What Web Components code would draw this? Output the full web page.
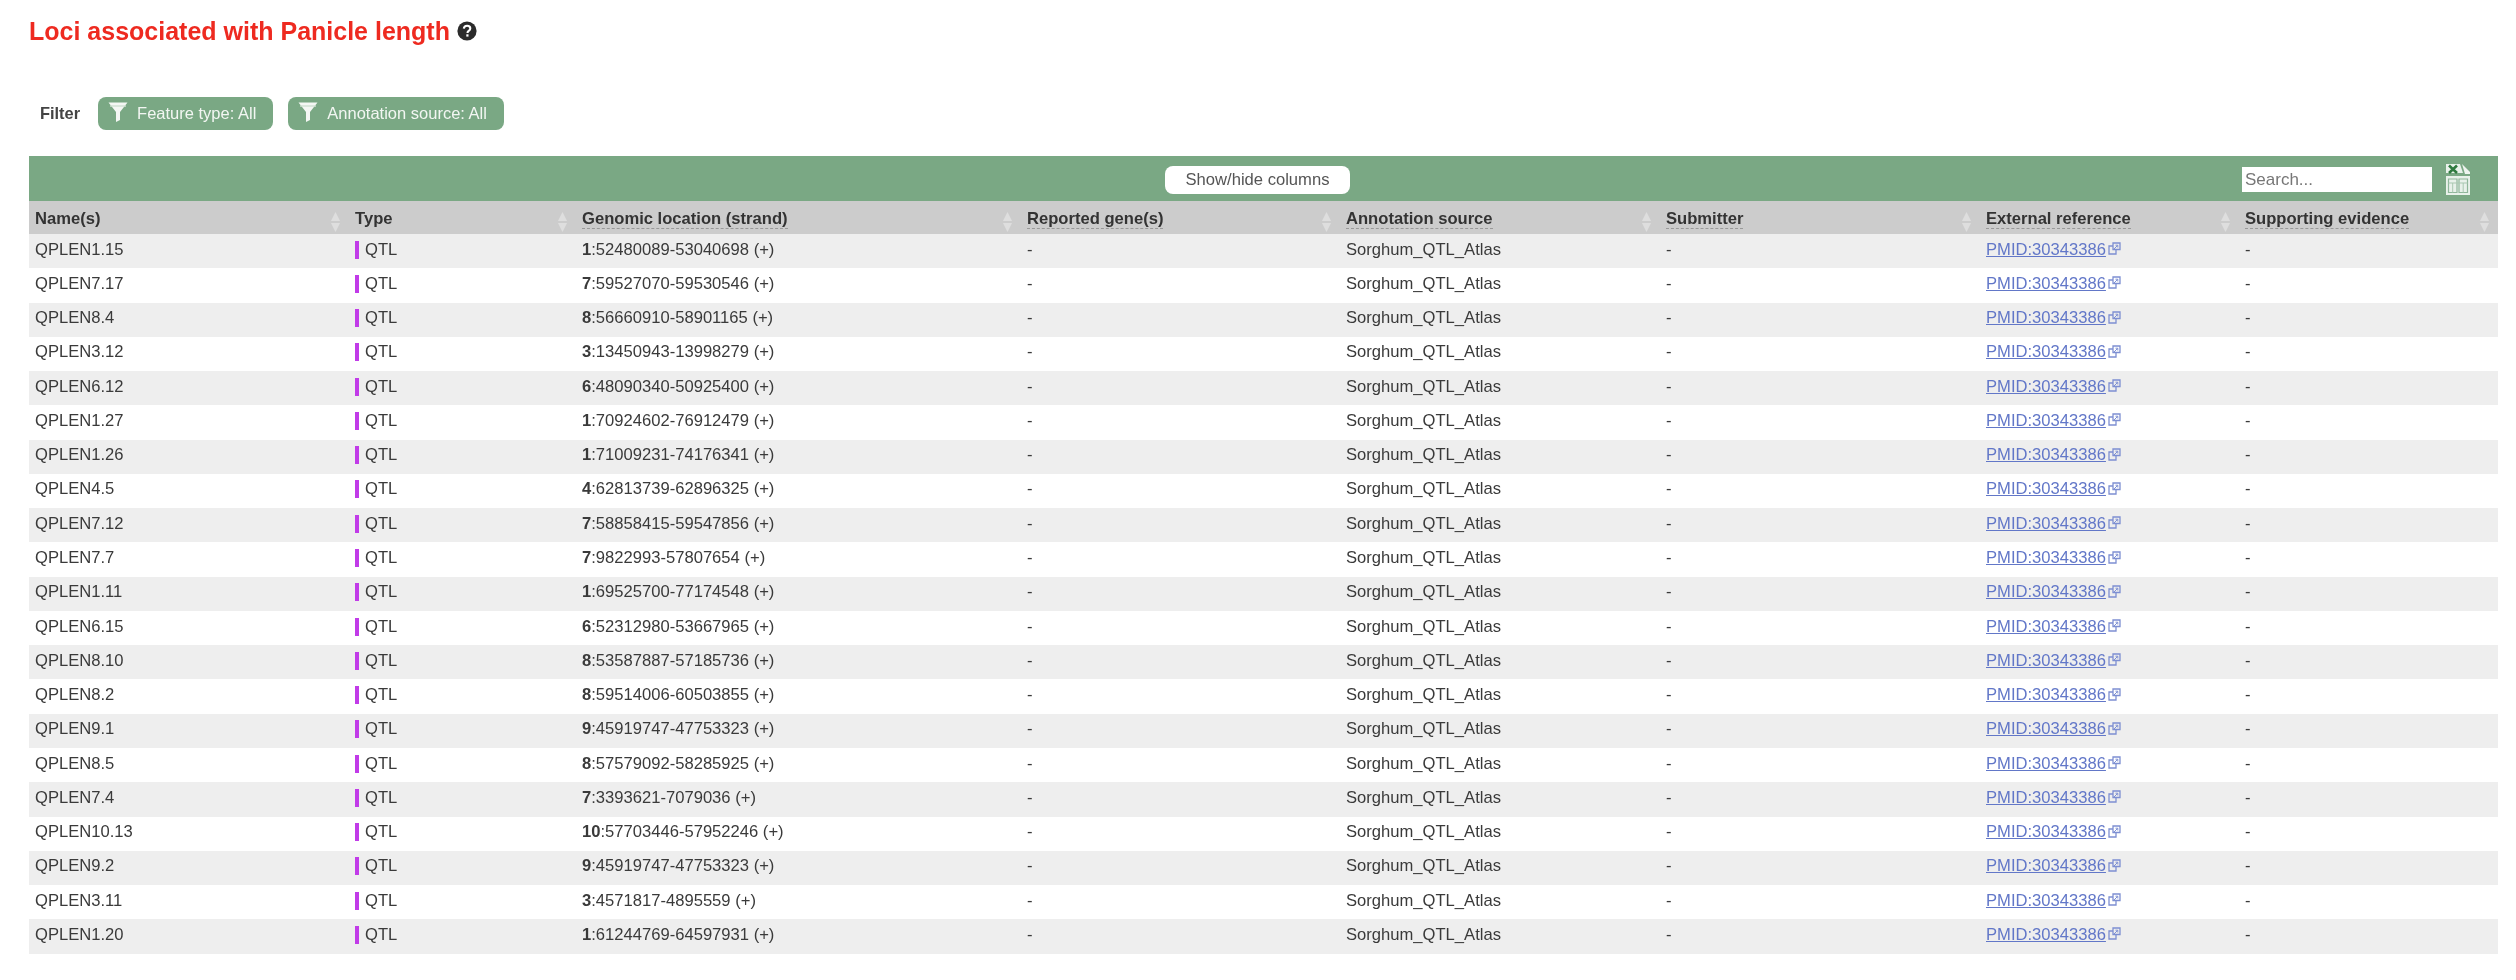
<!DOCTYPE html>
<html lang="en">
<head>
<meta charset="utf-8">
<title>Loci associated with Panicle length</title>
<style>
html,body{margin:0;padding:0;background:#fff;}
body{font-family:"Liberation Sans",Arial,sans-serif;font-size:16.6px;color:#333;}
</style>
</head>
<body>
<loci-page></loci-page>
<script>
const COLS='320px 227px 445px 319px 320px 320px 259px 259px';
function el(html){const t=document.createElement('template');t.innerHTML=html;return t;}

class HelpIcon extends HTMLElement{
  constructor(){super();this.attachShadow({mode:'open'}).innerHTML=`<style>:host{display:inline-flex;width:20px;height:20px}svg{display:block}</style>
  <svg width="20" height="20" viewBox="0 0 20 20"><circle cx="10" cy="10" r="9.6" fill="#2b2b2b"/><path d="M6.8 7.6c.2-1.9 1.5-2.9 3.3-2.9 1.9 0 3.2 1.1 3.2 2.7 0 1.3-.8 1.9-1.6 2.5-.8.6-1.2 1-1.2 2" fill="none" stroke="#fff" stroke-width="2.1"/><rect x="9.3" y="13.3" width="2.2" height="2.3" fill="#fff"/></svg>`;}
}
customElements.define('help-icon',HelpIcon);

class PageTitle extends HTMLElement{
  constructor(){super();this.attachShadow({mode:'open'}).innerHTML=`<style>
  :host{display:flex;height:97px;padding-bottom:51px;box-sizing:border-box;align-items:flex-end}
  h1{margin:0;font:bold 25px/30px "Liberation Sans",Arial,sans-serif;color:#ee2a20}
  help-icon{margin-bottom:5px}
  .wrap{display:flex;align-items:flex-end;gap:7px}
  </style><div class="wrap"><h1><slot></slot></h1><help-icon></help-icon></div>`;}
}
customElements.define('page-title',PageTitle);

class FilterChip extends HTMLElement{
  constructor(){super();this.attachShadow({mode:'open'}).innerHTML=`<style>
  :host{display:inline-flex;align-items:center;gap:9px;height:33px;box-sizing:border-box;padding:0 17px 0 10px;background:#7aa884;border-radius:8px;color:#f2f6f2;font-size:16.5px;white-space:nowrap}
  svg{display:block;margin-top:-4px}
  </style><svg width="20" height="20" viewBox="0 0 20 20"><path d="M0.5 0.5h19L12 10v8l-4 2v-10z" fill="#f4f7f4"/><path d="M2 4h16" stroke="#cfe0d2" stroke-width="1.4"/></svg><slot></slot>`;}
}
customElements.define('filter-chip',FilterChip);

class FilterBar extends HTMLElement{
  constructor(){super();this.attachShadow({mode:'open'}).innerHTML=`<style>
  :host{display:flex;align-items:center;height:33px;margin:0 0 26px 11px;color:#444}
  b{font-size:16.4px;margin-right:18px}
  .chips{display:flex;gap:15px}
  </style><b>Filter</b><div class="chips"><slot></slot></div>`;}
}
customElements.define('filter-bar',FilterBar);

class ExcelIcon extends HTMLElement{
  constructor(){super();this.attachShadow({mode:'open'}).innerHTML=`<style>:host{display:block;width:24px;height:31px}svg{display:block}</style>
  <svg width="24" height="31" viewBox="0 0 24 31"><path d="M0 12h24v19H0z" fill="#e8f1ea"/><path d="M2.5 15h8.5v13.5H2.5zM13 15h8.5v13.5H13z" fill="none" stroke="#8fb69a" stroke-width="1.2"/><path d="M2.5 19h19M6.7 19v9.5M17.2 19v9.5" stroke="#a9c7b1" stroke-width="1"/><path d="M0 0h14l3 9H0z" fill="#e8f1ea"/><path d="M3 1.5l8 7.5M11 1.5L3 9" stroke="#2f7a3f" stroke-width="2.6"/><path d="M16 0l8 8v2h-5z" fill="#eef4ef"/></svg>`;}
}
customElements.define('excel-icon',ExcelIcon);

class TableBar extends HTMLElement{
  constructor(){super();this.attachShadow({mode:'open'}).innerHTML=`<style>
  :host{display:grid;grid-template-columns:1136px 185px 1fr;align-items:center;height:44.5px;background:#7aa884;box-sizing:border-box}
  button{grid-column:2;height:28px;margin-top:3.5px;border:0;border-radius:8px;background:#fff;color:#555;font:16.6px "Liberation Sans",Arial,sans-serif;padding:0}
  .r{grid-column:3;display:flex;justify-content:flex-end;align-items:center;gap:14px;padding-right:28px}
  input{width:190px;height:25px;box-sizing:border-box;border:0;margin:3px 0 0;padding:0 3px;background:#fff;font:17px "Liberation Sans",Arial,sans-serif;color:#555}
  input::placeholder{color:#777;opacity:1}
  excel-icon{margin-top:2px}
  </style><button type="button">Show/hide columns</button><div class="r"><input placeholder="Search..."><excel-icon></excel-icon></div>`;}
}
customElements.define('table-bar',TableBar);

class HeadCell extends HTMLElement{
  constructor(){super();this.attachShadow({mode:'open'}).innerHTML=`<style>
  :host{display:flex;align-items:center;justify-content:space-between;padding:0 8px 0 6px;font-weight:bold;color:#333;white-space:nowrap;min-width:0}
  span{line-height:18px;margin-top:4px}
  :host([tip]) span{border-bottom:1px dashed #999}
  svg{display:block;flex:none;margin-top:9px}
  </style><span><slot></slot></span><svg width="11" height="20" viewBox="0 0 11 20"><path d="M5.5 0L10 9H1z" fill="#dedede"/><path d="M1 11h9l-4.5 9z" fill="#dedede"/></svg>`;}
}
customElements.define('head-cell',HeadCell);

class TableHead extends HTMLElement{
  constructor(){super();this.attachShadow({mode:'open'}).innerHTML=`<style>
  :host{display:grid;grid-template-columns:${COLS};height:33.5px;background:#ccc}
  </style><slot></slot>`;}
}
customElements.define('table-head',TableHead);

class ExtLink extends HTMLElement{
  constructor(){super();this.attachShadow({mode:'open'}).innerHTML=`<style>
  :host{display:inline-flex;align-items:center;gap:2px;color:#6277c8}
  a{color:inherit;text-decoration:underline}
  svg{display:block;margin-top:-2px}
  </style><a href="#"><slot></slot></a><svg width="13" height="13" viewBox="0 0 13 13" fill="none" stroke="#7d8fd2" stroke-width="1.3"><path d="M5 1h7v6.5H5z"/><path d="M5 4H1v8h7V8"/><path d="M6 7l3.5-3.5M7.5 3.2h2.3v2.3" stroke-width="1"/></svg>`;}
}
customElements.define('ext-link',ExtLink);

const rowT=el(`<style>
:host{display:grid;grid-template-columns:${COLS};align-items:center;height:34.28px;box-sizing:border-box;padding-bottom:3px;background:#fff;color:#3a3a3a;white-space:nowrap}
:host(:nth-child(odd)){background:#eee}
.c{padding-left:6px}
.t{display:flex;align-items:center;gap:6px}
.bar{width:4px;height:18px;background:#c13be8;flex:none}
</style>
<div class="c n"></div>
<div class="c t"><i class="bar"></i><span>QTL</span></div>
<div class="c"><b class="ch"></b><span class="loc"></span></div>
<div class="c">-</div>
<div class="c">Sorghum_QTL_Atlas</div>
<div class="c">-</div>
<div class="c"><ext-link>PMID:30343386</ext-link></div>
<div class="c">-</div>`);
class LociRow extends HTMLElement{
  constructor(){super();this.attachShadow({mode:'open'}).appendChild(rowT.content.cloneNode(true));}
  connectedCallback(){
    const s=this.shadowRoot,[c,r]=this.getAttribute('loc').split(':');
    s.querySelector('.n').textContent=this.getAttribute('name');
    s.querySelector('.ch').textContent=c;
    s.querySelector('.loc').textContent=':'+r+' (+)';
  }
}
customElements.define('loci-row',LociRow);

class LociTable extends HTMLElement{
  constructor(){super();this.attachShadow({mode:'open'}).innerHTML=`<style>:host{display:block;width:2469px}</style><slot></slot>`;}
}
customElements.define('loci-table',LociTable);

const DATA=[['QPLEN1.15','1:52480089-53040698'],['QPLEN7.17','7:59527070-59530546'],['QPLEN8.4','8:56660910-58901165'],['QPLEN3.12','3:13450943-13998279'],['QPLEN6.12','6:48090340-50925400'],['QPLEN1.27','1:70924602-76912479'],['QPLEN1.26','1:71009231-74176341'],['QPLEN4.5','4:62813739-62896325'],['QPLEN7.12','7:58858415-59547856'],['QPLEN7.7','7:9822993-57807654'],['QPLEN1.11','1:69525700-77174548'],['QPLEN6.15','6:52312980-53667965'],['QPLEN8.10','8:53587887-57185736'],['QPLEN8.2','8:59514006-60503855'],['QPLEN9.1','9:45919747-47753323'],['QPLEN8.5','8:57579092-58285925'],['QPLEN7.4','7:3393621-7079036'],['QPLEN10.13','10:57703446-57952246'],['QPLEN9.2','9:45919747-47753323'],['QPLEN3.11','3:4571817-4895559'],['QPLEN1.20','1:61244769-64597931']];

class LociPage extends HTMLElement{
  constructor(){super();
    const rows=DATA.map(d=>`<loci-row name="${d[0]}" loc="${d[1]}"></loci-row>`).join('');
    this.attachShadow({mode:'open'}).innerHTML=`<style>
    :host{display:block;padding:0 18px 0 29px;height:980px;box-sizing:border-box;overflow:hidden;filter:blur(.6px)}
    </style>
    <page-title>Loci associated with Panicle length</page-title>
    <filter-bar><filter-chip>Feature type: All</filter-chip><filter-chip>Annotation source: All</filter-chip></filter-bar>
    <table-bar></table-bar>
    <table-head>
      <head-cell>Name(s)</head-cell><head-cell>Type</head-cell><head-cell tip>Genomic location (strand)</head-cell><head-cell tip>Reported gene(s)</head-cell><head-cell tip>Annotation source</head-cell><head-cell tip>Submitter</head-cell><head-cell tip>External reference</head-cell><head-cell tip>Supporting evidence</head-cell>
    </table-head>
    <loci-table>${rows}</loci-table>`;}
}
customElements.define('loci-page',LociPage);
</script>
</body>
</html>
